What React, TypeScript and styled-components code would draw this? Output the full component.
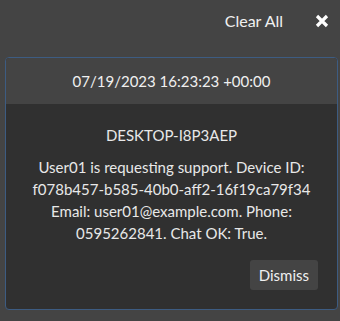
import React from "react";
import styled, { createGlobalStyle } from "styled-components";

const Global = createGlobalStyle`
  html, body { margin: 0; padding: 0; background: #444444; }
  body { font-family: Lato, "Open Sans", sans-serif; color: #e8e8e8; }
`;

const Page = styled.div`
  width: 340px;
  height: 321px;
  box-sizing: border-box;
  padding: 0 2px 0 5px;
  display: flex;
  flex-direction: column;
`;

const TopBar = styled.div`
  height: 41px;
  display: flex;
  align-items: center;
  justify-content: flex-end;
  gap: 32px;
  padding-right: 9px;
  box-sizing: border-box;
`;

const TextButton = styled.button`
  background: none;
  border: none;
  padding: 0;
  font-family: inherit;
  font-size: 16px;
  color: #f0f0f0;
  cursor: pointer;
`;

const CloseButton = styled.button`
  background: none;
  border: none;
  padding: 0;
  display: flex;
  color: #ffffff;
  cursor: pointer;
`;

const Card = styled.div`
  margin-top: 16px;
  border: 1px solid #3d5c82;
  border-radius: 4px;
  overflow: hidden;
  background: #303030;
  display: flex;
  flex-direction: column;
`;

const CardHeader = styled.div`
  background: #444444;
  height: 46px;
  display: flex;
  align-items: center;
  justify-content: center;
  font-size: 15px;
  color: #f0f0f0;
`;

const CardBody = styled.div`
  padding: 20px 19px 19px;
  display: flex;
  flex-direction: column;
  align-items: center;
  text-align: center;
`;

const Title = styled.div`
  font-size: 15px;
  line-height: 22px;
  margin-bottom: 10px;
`;

const Message = styled.div`
  font-size: 15px;
  line-height: 22px;
`;

const Actions = styled.div`
  align-self: stretch;
  display: flex;
  justify-content: flex-end;
  margin-top: 16px;
`;

const Dismiss = styled.button`
  background: #444444;
  border: none;
  border-radius: 3px;
  height: 30px;
  padding: 0 9px;
  font-family: inherit;
  font-size: 15px;
  color: #f0f0f0;
  cursor: pointer;
`;

export default function App() {
  return (
    <>
      <Global />
      <Page>
        <TopBar>
          <TextButton>Clear All</TextButton>
          <CloseButton aria-label="close">
            <svg width="14" height="14" viewBox="0 0 14 14">
              <path d="M2 2 L12 12 M12 2 L2 12" stroke="#fff" strokeWidth="3.2" strokeLinecap="butt" />
            </svg>
          </CloseButton>
        </TopBar>
        <Card>
          <CardHeader>07/19/2023 16:23:23 +00:00</CardHeader>
          <CardBody>
            <Title>DESKTOP-I8P3AEP</Title>
            <Message>
              User01 is requesting support. Device ID: f078b457-b585-40b0-aff2-16f19ca79f34 Email: user01@example.com. Phone: 0595262841. Chat OK: True.
            </Message>
            <Actions>
              <Dismiss>Dismiss</Dismiss>
            </Actions>
          </CardBody>
        </Card>
      </Page>
    </>
  );
}
